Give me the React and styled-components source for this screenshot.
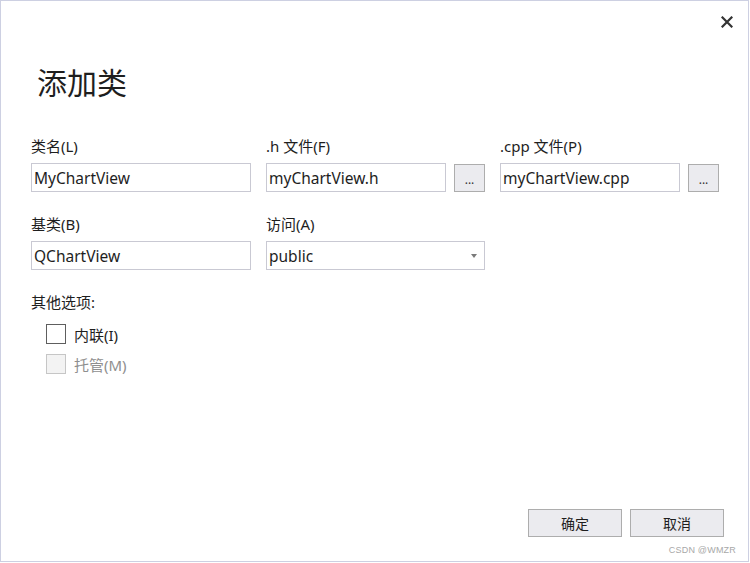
import React from "react";
import styled, { createGlobalStyle } from "styled-components";

const Global = createGlobalStyle`
  html, body { margin: 0; padding: 0; background: #ffffff; }
  body { font-family: "Noto Sans", "Noto Sans CJK SC", sans-serif; color: #1e1e1e; }
  * { box-sizing: border-box; }
`;

const Window = styled.div`
  position: relative;
  width: 749px;
  height: 562px;
  border: 1px solid #cdd0e2;
  background: #fff;
  display: flex;
  flex-direction: column;
  padding: 0 0 0 30px;
`;

const Close = styled.button`
  position: absolute;
  top: 12px;
  right: 12px;
  width: 18px;
  height: 18px;
  padding: 0;
  border: none;
  background: transparent;
  display: flex;
  align-items: center;
  justify-content: center;
`;

const Title = styled.h1`
  margin: 60px 0 0 6px;
  font-family: "Noto Sans CJK SC", sans-serif;
  font-weight: 400;
  font-size: 30px;
  line-height: 40px;
  color: #1e1e1e;
`;

const Grid = styled.div`
  margin-top: 36px;
  display: grid;
  grid-template-columns: 235px 234px 220px;
  row-gap: 23px;
`;

const Field = styled.div`
  display: flex;
  flex-direction: column;
  gap: 8px;
`;

const Label = styled.label`
  font-family: "Noto Sans", "Noto Sans CJK SC", sans-serif;
  font-size: 15px;
  line-height: 18px;
  height: 18px;
  color: #1e1e1e;
  white-space: nowrap;
`;

const InputRow = styled.div`
  display: flex;
  gap: 8px;
  align-items: center;
`;

const Input = styled.div`
  width: ${(p) => p.$w}px;
  height: 29px;
  border: 1px solid #c9c9d3;
  background: #fff;
  padding: 0 2px;
  display: flex;
  align-items: center;
  font-size: 15.5px;
  color: #1e1e1e;
  position: relative;
`;

const Arrow = styled.span`
  position: absolute;
  right: 7px;
  top: 12px;
  width: 0;
  height: 0;
  border-left: 3.5px solid transparent;
  border-right: 3.5px solid transparent;
  border-top: 4px solid #7a7a7a;
`;

const Dots = styled.button`
  width: 31px;
  height: 28px;
  border: 1px solid #adadad;
  background: #ebebef;
  padding: 0;
  font-family: "Noto Sans", sans-serif;
  font-size: 12px;
  color: #333;
  display: flex;
  align-items: center;
  justify-content: center;
  padding-top: 3px;
`;

const Section = styled.div`
  margin-top: 23px;
  display: flex;
  flex-direction: column;
`;

const Checks = styled.div`
  margin-top: 13px;
  padding-left: 15px;
  display: flex;
  flex-direction: column;
  gap: 10px;
`;

const CheckRow = styled.div`
  display: flex;
  align-items: center;
  gap: 8px;
  color: ${(p) => (p.$disabled ? "#8f8f8f" : "#1e1e1e")};
  font-size: 15px;
  height: 20px;
`;

const Box = styled.span`
  width: 20px;
  height: 20px;
  border: 1px solid ${(p) => (p.$disabled ? "#c6c6c6" : "#5e5e5e")};
  background: ${(p) => (p.$disabled ? "#f3f3f3" : "#fff")};
`;

const Footer = styled.div`
  margin-top: auto;
  display: flex;
  justify-content: flex-end;
  gap: 8px;
  padding-right: 24px;
`;

const Btn = styled.button`
  width: 94px;
  height: 28px;
  border: 1px solid #adadad;
  background: #ebebef;
  font-family: "Noto Sans CJK SC", sans-serif;
  font-size: 14px;
  color: #1e1e1e;
  padding: 0;
`;

const Watermark = styled.div`
  align-self: flex-end;
  margin: 8px 12px 6px 0;
  font-family: "Liberation Sans", sans-serif;
  font-size: 9px;
  color: #a8a8a8;
  letter-spacing: 0.2px;
`;

export default function App() {
  return (
    <>
      <Global />
      <Window>
        <Close aria-label="close">
          <svg width="12" height="12" viewBox="0 0 12 12">
            <path d="M1.5 1.5 L10.5 10.5 M10.5 1.5 L1.5 10.5" stroke="#333" strokeWidth="2.2" strokeLinecap="square" />
          </svg>
        </Close>
        <Title>添加类</Title>
        <Grid>
          <Field>
            <Label>类名(L)</Label>
            <InputRow>
              <Input $w={220}>MyChartView</Input>
            </InputRow>
          </Field>
          <Field>
            <Label>.h 文件(F)</Label>
            <InputRow>
              <Input $w={180}>myChartView.h</Input>
              <Dots>...</Dots>
            </InputRow>
          </Field>
          <Field>
            <Label>.cpp 文件(P)</Label>
            <InputRow>
              <Input $w={180}>myChartView.cpp</Input>
              <Dots>...</Dots>
            </InputRow>
          </Field>
          <Field>
            <Label>基类(B)</Label>
            <InputRow>
              <Input $w={220}>QChartView</Input>
            </InputRow>
          </Field>
          <Field>
            <Label>访问(A)</Label>
            <InputRow>
              <Input $w={219}>
                public
                <Arrow />
              </Input>
            </InputRow>
          </Field>
        </Grid>
        <Section>
          <Label>其他选项:</Label>
          <Checks>
            <CheckRow>
              <Box />
              内联(I)
            </CheckRow>
            <CheckRow $disabled>
              <Box $disabled />
              托管(M)
            </CheckRow>
          </Checks>
        </Section>
        <Footer>
          <Btn>确定</Btn>
          <Btn>取消</Btn>
        </Footer>
        <Watermark>CSDN @WMZR</Watermark>
      </Window>
    </>
  );
}
